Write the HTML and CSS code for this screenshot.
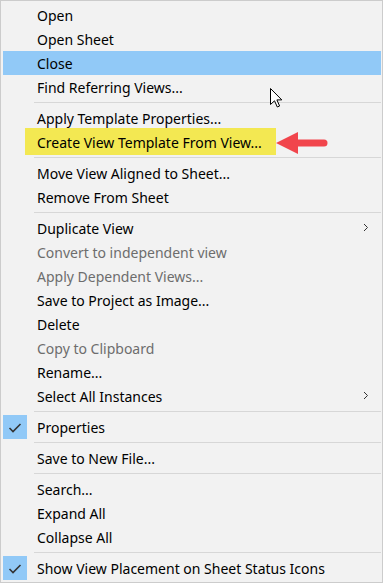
FILE: index.html
```html
<!DOCTYPE html>
<html lang="en">

<head>
    <meta charset="UTF-8">
    <meta name="viewport" content="width=device-width, initial-scale=1.0">
    <title>View Context Menu</title>
    <link rel="stylesheet" href="styles.css">
</head>

<body>

    <!-- Context menu -->
    <div class="menu">
        <div class="item"><span class="label">Open</span></div>
        <div class="item"><span class="label">Open Sheet</span></div>
        <div class="item hover"><span class="label">Close</span></div>
        <div class="item">
            <span class="label">Find Referring Views...</span>
            <!-- mouse pointer -->
            <svg class="cursor" width="13" height="20" viewBox="0 0 13 20">
                <path d="M0.5 0.5 L0.5 16.5 L4.5 12.8 L7.3 19 L9.6 18 L6.9 11.9 L11.8 11.9 Z" fill="#fff" stroke="#000" stroke-width="1" stroke-linejoin="miter"/>
            </svg>
        </div>
        <div class="sep"></div>

        <div class="item"><span class="label">Apply Template Properties...</span></div>
        <div class="item">
            <span class="mark"></span>
            <span class="label">Create View Template From View...</span>
            <!-- red pointer arrow -->
            <svg class="arrow" width="52" height="24" viewBox="0 0 52 24">
                <path d="M0 12 L22 1 L22 23 Z" fill="#f1454c"/>
                <line x1="20" y1="12" x2="48" y2="12" stroke="#f1454c" stroke-width="7" stroke-linecap="round"/>
            </svg>
        </div>
        <div class="sep"></div>

        <div class="item"><span class="label">Move View Aligned to Sheet...</span></div>
        <div class="item"><span class="label">Remove From Sheet</span></div>
        <div class="sep"></div>

        <div class="item">
            <span class="label">Duplicate View</span>
            <svg class="chevron" width="6" height="9" viewBox="0 0 6 9"><path d="M1 1 L4.5 4.5 L1 8" fill="none" stroke="#333" stroke-width="1"/></svg>
        </div>
        <div class="item disabled"><span class="label">Convert to independent view</span></div>
        <div class="item disabled"><span class="label">Apply Dependent Views...</span></div>
        <div class="item"><span class="label">Save to Project as Image...</span></div>
        <div class="item"><span class="label">Delete</span></div>
        <div class="item disabled"><span class="label">Copy to Clipboard</span></div>
        <div class="item"><span class="label">Rename...</span></div>
        <div class="item">
            <span class="label">Select All Instances</span>
            <svg class="chevron" width="6" height="9" viewBox="0 0 6 9"><path d="M1 1 L4.5 4.5 L1 8" fill="none" stroke="#333" stroke-width="1"/></svg>
        </div>
        <div class="sep"></div>

        <div class="item checked">
            <span class="check"><svg width="24" height="24" viewBox="0 0 24 24"><path d="M6.5 13 L10 16.5 L17.5 9" fill="none" stroke="#333" stroke-width="1.6"/></svg></span>
            <span class="label">Properties</span>
        </div>
        <div class="sep"></div>

        <div class="item"><span class="label">Save to New File...</span></div>
        <div class="sep"></div>

        <div class="item"><span class="label">Search...</span></div>
        <div class="item"><span class="label">Expand All</span></div>
        <div class="item"><span class="label">Collapse All</span></div>
        <div class="sep"></div>

        <div class="item checked">
            <span class="check"><svg width="24" height="24" viewBox="0 0 24 24"><path d="M6.5 13 L10 16.5 L17.5 9" fill="none" stroke="#333" stroke-width="1.6"/></svg></span>
            <span class="label">Show View Placement on Sheet Status Icons</span>
        </div>
    </div>

</body>

</html>
```

FILE: styles.css
```css
/* Page */
body {
    margin: 0;
    padding: 0;
    background-color: #ffffff;
    font-family: "Noto Sans", "Open Sans", sans-serif;
    font-size: 14px;
    color: #000000;
}

/* Menu box */
.menu {
    width: 381px;
    background-color: #f2f2f2;
    border: 1px solid #cccccc;
    padding: 2px 0;
    margin-right: 2px;
}

/* Menu rows */
.item {
    height: 24px;
    display: flex;
    align-items: center;
    position: relative;
    padding-left: 34px;
    margin: 0 1px 0 2px;
}

.item.hover {
    background-color: #91c9f7;
}

.item.disabled {
    color: #6d6d6d;
}

.label {
    position: relative;
    white-space: nowrap;
}

/* Check column */
.check {
    position: absolute;
    left: 0;
    top: 0;
    width: 24px;
    height: 24px;
    display: none;
}

.item.checked .check {
    display: block;
    background-color: #91c9f7;
}

.check svg {
    display: block;
}

/* Submenu arrow */
.chevron {
    position: absolute;
    right: 12px;
    top: 7px;
}

/* Separator */
.sep {
    height: 1px;
    background-color: #d7d7d7;
    margin: 3px 1px 3px 33px;
}

/* Annotation: yellow marker */
.mark {
    position: absolute;
    left: 22px;
    top: -2px;
    width: 251px;
    height: 27px;
    background-color: #f3e852;
}

/* Annotation: red arrow */
.arrow {
    position: absolute;
    left: 273px;
    top: 1px;
}

/* Mouse pointer */
.cursor {
    position: absolute;
    left: 267px;
    top: 13px;
}
```
